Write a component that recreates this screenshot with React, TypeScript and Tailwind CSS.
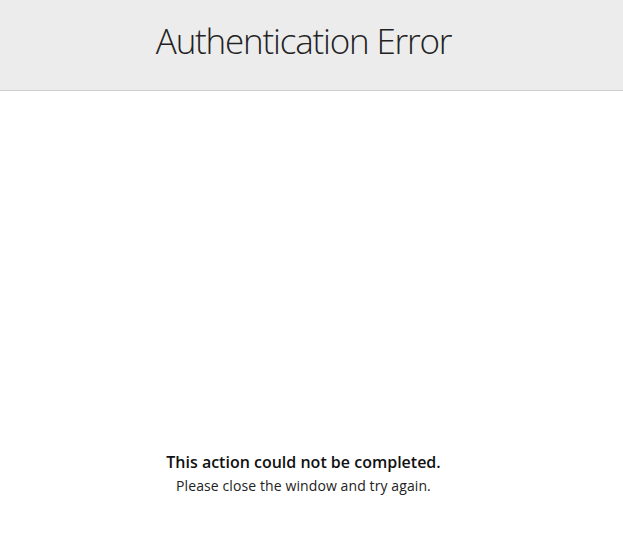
export default function App() {
  return (
    <div className="w-[623px] h-[549px] bg-white" style={{ fontFamily: '"Open Sans", "Noto Sans", sans-serif' }}>
      <div className="h-[91px] bg-[#ececec] border-b border-[#cfcfcf] flex items-center justify-center pr-4">
        <h1 className="text-[35px] font-light text-[#222] tracking-[-1.2px] mt-[-8px]">Authentication Error</h1>
      </div>
      <div className="pr-4 pt-[360px] text-center text-[#111]">
        <p className="text-[16px] font-semibold leading-[22px]">This action could not be completed.</p>
        <p className="text-[14px] leading-[20px] text-[#222] tracking-[0.1px] mt-[3px]">Please close the window and try again.</p>
      </div>
    </div>
  );
}
